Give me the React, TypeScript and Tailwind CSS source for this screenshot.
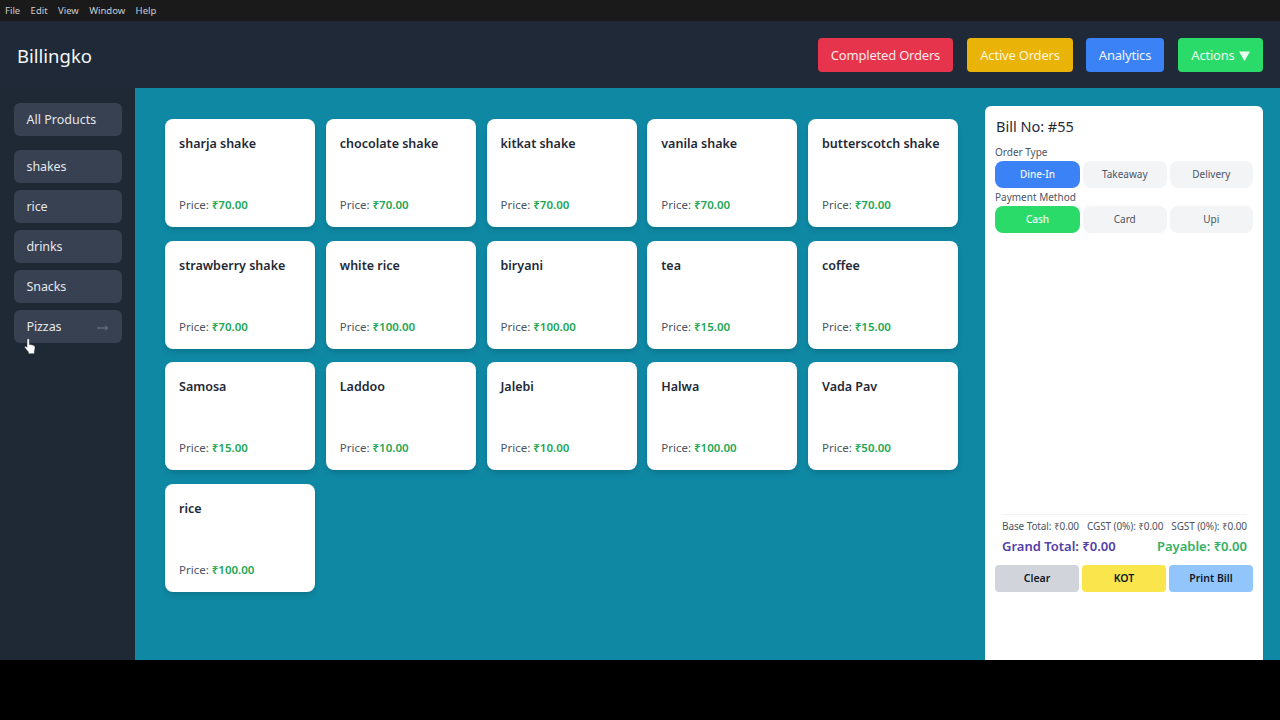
import React from "react";

const products: [string, string][] = [
  ["sharja shake", "70.00"], ["chocolate shake", "70.00"], ["kitkat shake", "70.00"], ["vanila shake", "70.00"], ["butterscotch shake", "70.00"],
  ["strawberry shake", "70.00"], ["white rice", "100.00"], ["biryani", "100.00"], ["tea", "15.00"], ["coffee", "15.00"],
  ["Samosa", "15.00"], ["Laddoo", "10.00"], ["Jalebi", "10.00"], ["Halwa", "100.00"], ["Vada Pav", "50.00"],
  ["rice", "100.00"],
];
const categories = ["shakes", "rice", "drinks", "Snacks", "Pizzas"];

function Seg({ label, active, first }: { label: string; active?: string; first?: boolean }) {
  const size = first ? "w-[85px]" : "flex-1";
  const look =
    active === "blue"
      ? "bg-[#3b82f6] text-[#f1f6ff] font-medium"
      : active === "green"
        ? "bg-[#2bdb6a] text-[#f1fff6] font-medium"
        : "bg-[#f3f4f6] text-[#4b5563]";
  return <div className={`${size} ${look} h-[27px] rounded-lg flex items-center justify-center text-[10px]`}>{label}</div>;
}

export default function App() {
  return (
    <div className="relative w-[1280px] h-[720px] overflow-hidden bg-black flex flex-col font-['Noto_Sans','Open_Sans',sans-serif]">
      <div className="h-[21px] bg-[#1a1a1a] flex items-center gap-[10.4px] pl-[5px] pt-[1px] text-[9.5px] text-[#c9cdd2] shrink-0">
        <span>File</span><span>Edit</span><span>View</span><span>Window</span><span>Help</span>
      </div>
      <div className="h-[639px] flex flex-col bg-[#1f2937] shrink-0">
        <div className="h-[67px] flex items-center justify-between pl-[17px] pr-[17px] shrink-0">
          <div className="text-[18.5px] text-[#f3f6f8] pt-[2px]">Billingko</div>
          <div className="flex items-center text-[13px] tracking-[-0.2px] pt-[1px]">
            <div className="h-[34px] w-[135px] rounded bg-[#e5344b] text-[#fde7ea] flex items-center justify-center pt-[2px] mr-[14px]">Completed Orders</div>
            <div className="h-[34px] w-[106px] rounded bg-[#eab308] text-[#fdf6dc] flex items-center justify-center pt-[2px] mr-[13px]">Active Orders</div>
            <div className="h-[34px] w-[78px] rounded bg-[#3b82f6] text-[#eef5ff] flex items-center justify-center pt-[2px] mr-[14px]">Analytics</div>
            <div className="h-[34px] w-[85px] rounded bg-[#2bdb6a] text-[#eafff2] flex items-center justify-center gap-[4px] pt-[2px]">
              Actions
              <svg width="11" height="10" viewBox="0 0 11 10"><path d="M0 0.5H11L5.5 10Z" fill="#eafff2" /></svg>
            </div>
          </div>
        </div>
        <div className="flex-1 flex min-h-0">
          <div className="w-[135px] shrink-0 pl-[14px] pt-[15px] bg-[#1e2935]">
            <div className="w-[108px] h-[33px] rounded-md bg-[#374151] text-[#e5e7eb] text-[12.5px] flex items-center pl-[12.5px] pt-[2px] mb-[14px]">All Products</div>
            <div className="flex flex-col gap-[7px] w-[108px]">
              {categories.map((c) => (
                <div key={c} className="h-[33px] rounded-md bg-[#374151] text-[#e5e7eb] text-[12.5px] tracking-[-0.1px] flex items-center justify-between pl-[12.5px] pr-[14px] pt-[2px]">
                  <span>{c}</span>
                  {c === "Pizzas" && (
                    <svg width="11" height="6" viewBox="0 0 11 6" fill="none" stroke="#7b8594" strokeWidth="0.9"><path d="M0 3H10.5M8 0.8L10.5 3L8 5.2" /></svg>
                  )}
                </div>
              ))}
            </div>
          </div>
          <div className="flex-1 bg-[#0f88a3] flex min-w-0">
            <div className="w-[850px] shrink-0 pl-[30px] pt-[31px]">
              <div className="grid grid-cols-[repeat(5,150px)] gap-x-[10.75px] gap-y-[13.67px]">
                {products.map(([n, p]) => (
                  <div key={n} className="h-[108px] rounded-lg bg-white shadow-md pl-[14px] pr-[8px] pt-[15px] pb-[13px] flex flex-col justify-between">
                    <div className="text-[12.5px] font-semibold leading-[20px] text-[#1f2937] whitespace-nowrap">{n}</div>
                    <div className="text-[11.5px] leading-[18px] text-[#4b5563]">
                      Price: <span className="font-semibold text-[#22a755]">₹{p}</span>
                    </div>
                  </div>
                ))}
              </div>
            </div>
            <div className="w-[278px] mt-[18px] bg-white rounded-t-md flex flex-col pl-[10px] pr-[10px] pt-[10px]">
              <div className="text-[14.5px] leading-[20px] text-[#1f2937] mb-[10px] pl-[1px]">Bill No: #55</div>
              <div className="text-[10px] leading-[13px] text-[#4b5563] mb-[2px]">Order Type</div>
              <div className="flex gap-[3px]"><Seg first label="Dine-In" active="blue" /><Seg label="Takeaway" /><Seg label="Delivery" /></div>
              <div className="text-[10px] leading-[13px] text-[#4b5563] mt-[3px] mb-[2px]">Payment Method</div>
              <div className="flex gap-[3px]"><Seg first label="Cash" active="green" /><Seg label="Card" /><Seg label="Upi" /></div>
              <div className="flex-1" />
              <div className="ml-[7px] mr-[6px] border-t border-[#f1f3f5] pt-[3.5px]">
                <div className="flex justify-between text-[10px] tracking-[-0.1px] leading-[14px] text-[#4b5563] whitespace-nowrap">
                  <span>Base Total: ₹0.00</span><span>CGST (0%): ₹0.00</span><span>SGST (0%): ₹0.00</span>
                </div>
                <div className="flex justify-between text-[13px] font-semibold leading-[18px] mt-[4px] mb-[0.5px] whitespace-nowrap">
                  <span className="text-[#5340a8]">Grand Total: ₹0.00</span>
                  <span className="text-[#34b164]">Payable: ₹0.00</span>
                </div>
              </div>
              <div className="flex gap-[3px] mt-[10px] mb-[68px] text-[10.5px] font-semibold text-[#111827]">
                <div className="flex-1 h-[27px] rounded bg-[#d1d5db] flex items-center justify-center">Clear</div>
                <div className="flex-1 h-[27px] rounded bg-[#fae64c] flex items-center justify-center">KOT</div>
                <div className="flex-1 h-[27px] rounded bg-[#93c5fd] flex items-center justify-center">Print Bill</div>
              </div>
            </div>
            <div className="flex-1" />
          </div>
        </div>
      </div>
      <svg className="absolute left-[24px] top-[338px]" width="12" height="17" viewBox="0 0 12 17">
        <path d="M3 1.6C3 0.4 5.4 0.4 5.4 1.6V6.6L7 6.6L8.6 7L10 7.6C11 8 11.2 9.5 11 10.8L10.4 13.4V15.8H4.4V14L1 10C0.2 8.8 1.4 7.6 2.2 8.4L3 9.3Z" fill="#ffffff" stroke="#1a1f26" strokeWidth="0.5" />
      </svg>
    </div>
  );
}
